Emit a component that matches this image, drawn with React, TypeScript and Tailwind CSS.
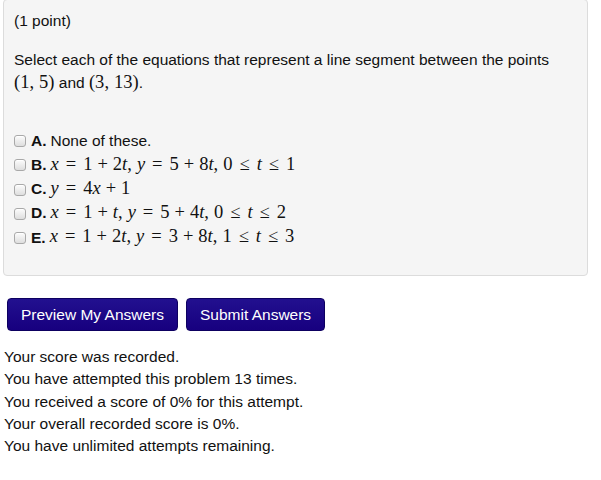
import React from 'react';

const V: React.FC<{ children: React.ReactNode }> = ({ children }) => (
  <span className="italic">{children}</span>
);

// relation (=, ≤) gets thick spacing, binary (+) medium
const Rel: React.FC<{ children: React.ReactNode }> = ({ children }) => (
  <span className="mx-[7px]">{children}</span>
);
const Bin: React.FC<{ children: React.ReactNode }> = ({ children }) => (
  <span className="mx-[5px]">{children}</span>
);
const Comma: React.FC = () => <span className="mr-[5px]">,</span>;

const Math: React.FC<{ children: React.ReactNode }> = ({ children }) => (
  <span className="font-['Liberation_Serif',serif] text-[18.5px]">{children}</span>
);

const Box: React.FC = () => (
  <span className="inline-block w-[12px] h-[12px] rounded-[3px] border border-[#a9a9a9] bg-gradient-to-b from-[#fcfcfc] to-[#dedede] shadow-[inset_0_1px_0_#fff] mr-[5px] translate-y-[1px]" />
);

const options: { key: string; body: React.ReactNode }[] = [
  { key: 'A', body: <span>None of these.</span> },
  {
    key: 'B',
    body: (
      <Math>
        <V>x</V><Rel>=</Rel>1<Bin>+</Bin>2<V>t</V><Comma /><V>y</V><Rel>=</Rel>5<Bin>+</Bin>8<V>t</V><Comma />0<Rel>≤</Rel><V>t</V><Rel>≤</Rel>1
      </Math>
    ),
  },
  {
    key: 'C',
    body: (
      <Math>
        <V>y</V><Rel>=</Rel>4<V>x</V><Bin>+</Bin>1
      </Math>
    ),
  },
  {
    key: 'D',
    body: (
      <Math>
        <V>x</V><Rel>=</Rel>1<Bin>+</Bin><V>t</V><Comma /><V>y</V><Rel>=</Rel>5<Bin>+</Bin>4<V>t</V><Comma />0<Rel>≤</Rel><V>t</V><Rel>≤</Rel>2
      </Math>
    ),
  },
  {
    key: 'E',
    body: (
      <Math>
        <V>x</V><Rel>=</Rel>1<Bin>+</Bin>2<V>t</V><Comma /><V>y</V><Rel>=</Rel>3<Bin>+</Bin>8<V>t</V><Comma />1<Rel>≤</Rel><V>t</V><Rel>≤</Rel>3
      </Math>
    ),
  },
];

const App: React.FC = () => {
  return (
    <div className="w-[601px] h-[480px] bg-white font-['Liberation_Sans',Arial,sans-serif] text-[15.5px] text-[#111] overflow-hidden">
      {/* Problem panel */}
      <div className="ml-[3px] mt-[-1px] w-[585px] h-[277px] bg-[#f5f5f5] border border-[#dcdcdc] rounded-[4px] px-[10px] pt-[11px]">
        <p className="leading-[20px]">(1 point)</p>
        <p className="mt-[18px] leading-[22px]">
          Select each of the equations that represent a line segment between the points
          <br />
          <Math>(1<Comma />5)</Math> and <Math>(3<Comma />13)</Math>.
        </p>
        <ul className="mt-[34px]">
          {options.map((o) => (
            <li key={o.key} className="flex items-center h-[24.3px]">
              <Box />
              <span className="font-bold mr-[4px]">{o.key}.</span>
              {o.body}
            </li>
          ))}
        </ul>
      </div>

      {/* Buttons */}
      <div className="flex gap-[8px] ml-[7px] mt-[22px]">
        <button className="h-[33px] px-[13px] rounded-[4px] bg-gradient-to-b from-[#22108f] to-[#17007f] border border-[#0d0060] text-white">
          Preview My Answers
        </button>
        <button className="h-[33px] px-[13px] rounded-[4px] bg-gradient-to-b from-[#22108f] to-[#17007f] border border-[#0d0060] text-white">
          Submit Answers
        </button>
      </div>

      {/* Score messages */}
      <div className="ml-[4px] mt-[15px] leading-[22.3px]">
        <p>Your score was recorded.</p>
        <p>You have attempted this problem 13 times.</p>
        <p>You received a score of 0% for this attempt.</p>
        <p>Your overall recorded score is 0%.</p>
        <p>You have unlimited attempts remaining.</p>
      </div>
    </div>
  );
};

export default App;
